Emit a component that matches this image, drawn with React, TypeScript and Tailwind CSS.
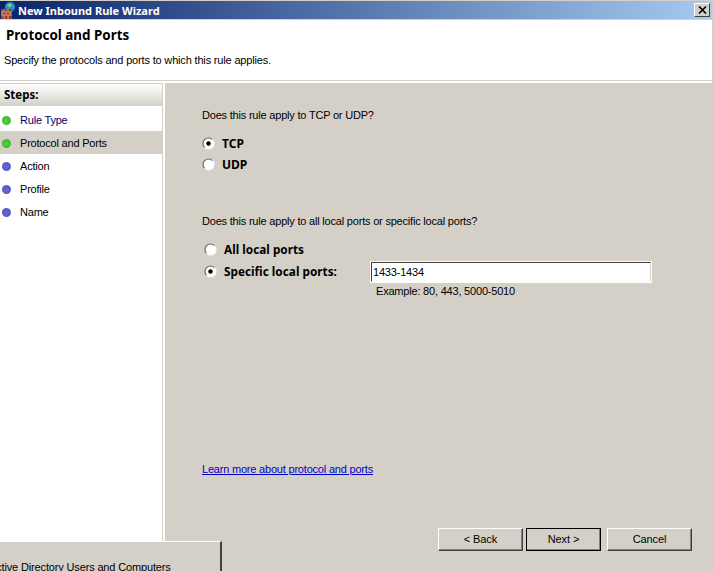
const font = { fontFamily: '"Liberation Sans", Arial, sans-serif' };
const boldFont = { fontFamily: '"Noto Sans", "Liberation Sans", sans-serif' };

function Bullet({ done }: { done: boolean }) {
    return (
        <span
            className={
                done
                    ? "w-[9px] h-[9px] rounded-full shrink-0 bg-[radial-gradient(circle_at_45%_55%,#60d048,#40b830_60%,#a8dca0)]"
                    : "w-[9px] h-[9px] rounded-full shrink-0 bg-[radial-gradient(circle_at_45%_55%,#6868d0,#5858c0_60%,#a8a8dc)]"
            }
        />
    );
}

function Radio({ checked }: { checked: boolean }) {
    return (
        <svg width="13" height="13" viewBox="0 0 13 13" className="shrink-0 -mt-[2px]">
            <circle cx="6.5" cy="6.5" r="5" fill="#fff" />
            <path d="M2.6 10.4A5.5 5.5 0 0 1 10.4 2.6" fill="none" stroke="#6e6c66" strokeWidth="1.2" />
            <path d="M10.4 2.6A5.5 5.5 0 0 1 2.6 10.4" fill="none" stroke="#ffffff" strokeWidth="1.2" />
            {checked && <circle cx="6.5" cy="6.5" r="2.2" fill="#000" />}
        </svg>
    );
}

function Button({ label, active, width }: { label: string; active?: boolean; width: string }) {
    return (
        <div className={`${width} ${active ? "outline outline-1 -outline-offset-1 outline-black" : ""} h-[23px] bg-[#d4d0c8] border border-t-white border-l-white border-r-[#404040] border-b-[#404040] shadow-[inset_-1px_-1px_0_#808080] flex items-center justify-center text-[11px] tracking-[-0.1px] text-black`}>
            {label}
        </div>
    );
}

export default function App() {
    return (
        <div style={font} className="relative w-[713px] h-[571px] overflow-hidden bg-[#d4d0c8] flex flex-col border-r border-[#d4d0c8] text-black">
            {/* Title bar */}
            <div className="mt-px h-[18px] shrink-0 flex items-center justify-between bg-[linear-gradient(90deg,#0a246a,#a6caf0)] pr-[2px]">
                <div className="flex items-center gap-[2px]">
                    <svg width="16" height="17" viewBox="0 0 16 17">
                        <circle cx="10" cy="5" r="5" fill="#2a8fc8" />
                        <path d="M7 3q3-3 5 0q-1 3-3 2z" fill="#7fd070" />
                        <rect x="1" y="7" width="11" height="10" fill="#96412e" />
                        <path d="M1 10h11M1 13h11M4 7v3M8 7v3M2 10v3M6 10v3M10 10v3M4 13v4M8 13v4" stroke="#d49a7c" strokeWidth="1" />
                    </svg>
                    <span style={boldFont} className="text-[11px] font-bold text-white leading-none">New Inbound Rule Wizard</span>
                </div>
                <div className="w-[16px] h-[14px] bg-[#d4d0c8] border border-t-white border-l-white border-r-[#404040] border-b-[#404040] flex items-center justify-center">
                    <svg width="9" height="8" viewBox="0 0 9 8">
                        <path d="M1 0.5l7 7M8 0.5l-7 7" stroke="#000" strokeWidth="1.6" />
                    </svg>
                </div>
            </div>

            {/* Header */}
            <div className="mt-px h-[60px] shrink-0 bg-white pl-[6px] pt-[6px]">
                <div style={boldFont} className="text-[13.4px] font-bold leading-[18px]">Protocol and Ports</div>
                <div className="mt-[8px] -ml-[2px] text-[11px] tracking-[-0.17px] leading-[16px]">Specify the protocols and ports to which this rule applies.</div>
            </div>
            <div className="h-px shrink-0" />
            <div className="h-[2px] shrink-0 bg-white" />

            {/* Body */}
            <div className="flex-1 flex min-h-0">
                <div className="w-[162px] shrink-0 bg-white border-t border-[#d4d0c8]">
                    <div style={boldFont} className="h-[22px] pl-[4px] flex items-center text-[11.5px] font-bold bg-[linear-gradient(180deg,#ffffff,#d4d0c8)]">Steps:</div>
                    <div className="mt-[2px] flex flex-col text-[11px] tracking-[-0.2px]">
                        <div className="h-[23px] flex items-center gap-[9px] pl-[2px] pt-[2px] text-[#00006e]">
                            <Bullet done />
                            Rule Type
                        </div>
                        <div className="h-[23px] flex items-center gap-[9px] pl-[2px] pt-[2px] bg-[#d4d0c8]">
                            <Bullet done />
                            Protocol and Ports
                        </div>
                        {["Action", "Profile", "Name"].map((step) => (
                            <div key={step} className="h-[23px] flex items-center gap-[9px] pl-[2px] pt-[2px]">
                                <Bullet done={false} />
                                {step}
                            </div>
                        ))}
                    </div>
                </div>
                <div className="w-[2px] shrink-0 ml-px bg-white" />

                <div className="flex-1 flex flex-col pl-[37px] text-[11px] tracking-[-0.2px]">
                    <div className="mt-[24px] leading-[16px]">Does this rule apply to TCP or UDP?</div>
                    <div style={boldFont} className="mt-[13px] flex items-center gap-[7px] h-[16px] text-[12px] tracking-normal font-bold">
                        <Radio checked />
                        TCP
                    </div>
                    <div style={boldFont} className="mt-[5px] flex items-center gap-[7px] h-[16px] text-[12px] tracking-normal font-bold">
                        <Radio checked={false} />
                        UDP
                    </div>
                    <div className="mt-[40px] leading-[16px]">Does this rule apply to all local ports or specific local ports?</div>
                    <div style={boldFont} className="mt-[13px] flex items-center gap-[7px] h-[16px] pl-[2px] text-[11.8px] tracking-normal font-bold">
                        <Radio checked={false} />
                        All local ports
                    </div>
                    <div className="mt-[4px] flex items-center h-[20px] pl-[2px]">
                        <Radio checked />
                        <span style={boldFont} className="ml-[7px] w-[147px] text-[11.8px] tracking-normal font-bold">Specific local ports:</span>
                        <div className="w-[280px] h-[20px] bg-white border border-t-[#404040] border-l-[#404040] border-r-[#d4d0c8] border-b-white pl-[1px] flex items-center outline outline-1 outline-white">
                            1433-1434
                        </div>
                    </div>
                    <div className="mt-[1px] ml-[174px] leading-[16px]">Example: 80, 443, 5000-5010</div>
                    <a className="mt-[162px] leading-[16px] text-[#0000c8] underline w-fit">Learn more about protocol and ports</a>
                    <div className="mt-[51px] flex pl-[236px]">
                        <Button label="< Back" width="w-[85px]" />
                        <div className="w-[3px]" />
                        <Button label="Next >" width="w-[75px]" active />
                        <div className="w-[6px]" />
                        <Button label="Cancel" width="w-[85px]" />
                    </div>
                </div>
            </div>

            {/* Window behind the wizard, showing at the lower left */}
            <div className="absolute left-0 top-[541px] w-[222px] h-[30px] bg-[#d4d0c8] border-t border-white border-r-2 border-r-[#404040] overflow-hidden">
                <div className="absolute -left-[11px] top-[17px] whitespace-nowrap text-[11px] tracking-[-0.15px] leading-[16px]">Active Directory Users and Computers</div>
            </div>
        </div>
    );
}
